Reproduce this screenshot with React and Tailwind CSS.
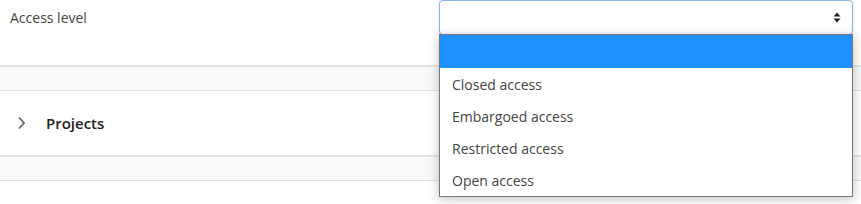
export default function App() {
  const options = ["Closed access", "Embargoed access", "Restricted access", "Open access"];
  return (
    <div
      className="relative w-[861px] h-[204px] bg-white overflow-hidden text-[14px]"
      style={{ fontFamily: '"Open Sans", "Noto Sans", sans-serif' }}
    >
      <div className="flex h-[65px]">
        <div className="w-[439px] pl-[10px] pt-[7px] text-[#444]">Access level</div>
        <div className="relative w-[414px] h-[35px]">
          <div className="h-[35px] rounded-[4px] border border-[#8ab4e8] bg-white shadow-[0_0_3px_rgba(0,0,0,0.15)] flex items-center justify-end pr-[11px]">
            <svg width="8" height="11" viewBox="0 0 8 11">
              <path d="M4 0.5 L7.5 4.5 H0.5 Z" fill="#222" />
              <path d="M4 10.5 L7.5 6.5 H0.5 Z" fill="#222" />
            </svg>
          </div>
          <div className="absolute left-0 top-[34px] w-[414px] border border-[#777] bg-white shadow-[0_2px_10px_rgba(0,0,0,0.25)] z-10">
            <div className="h-[33px] bg-[#1e90ff]" />
            {options.map((o) => (
              <div key={o} className="h-[32px] flex items-center pl-[12px] text-[#444]">
                {o}
              </div>
            ))}
          </div>
        </div>
      </div>
      <div className="h-[26px] border-t-2 border-t-[#e4e4e4] border-b border-b-[#dedede] bg-[#f9f9f9]" />
      <div className="h-[64px] flex items-center">
        <div className="w-[46px] flex justify-center pr-[4px]">
          <svg width="9" height="14" viewBox="0 0 9 14">
            <path d="M2 1.5 L7 7 L2 12.5" fill="none" stroke="#666" strokeWidth="1.8" />
          </svg>
        </div>
        <div className="text-[15px] font-semibold text-[#222]">Projects</div>
      </div>
      <div className="h-[26px] border-t-2 border-t-[#e4e4e4] border-b border-b-[#dedede] bg-[#f9f9f9]" />
    </div>
  );
}
